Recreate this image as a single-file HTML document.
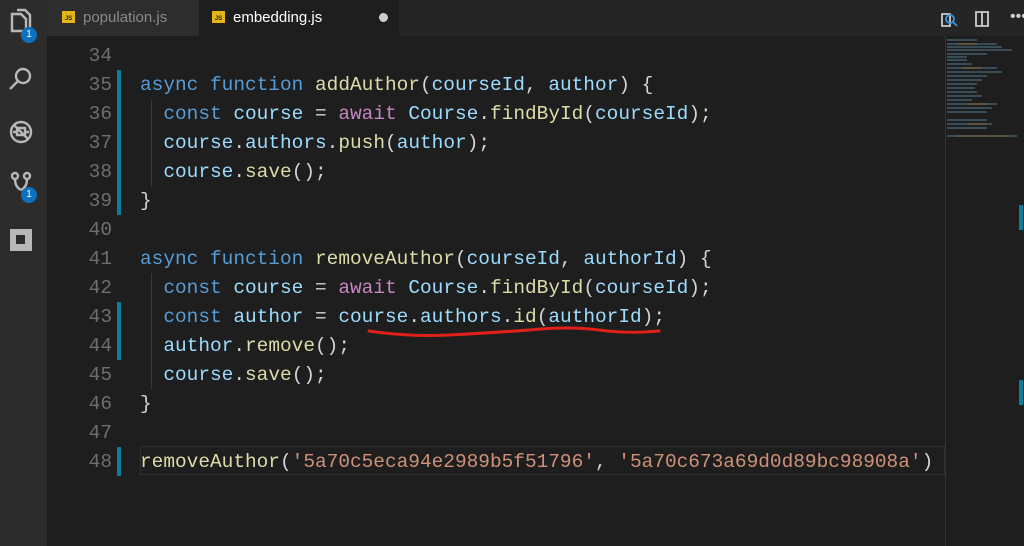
<!DOCTYPE html>
<html><head><style>
body{margin:0;width:1024px;height:546px;background:#1e1e1e;overflow:hidden;position:relative;font-family:"Liberation Sans",sans-serif}
#act{position:absolute;left:0;top:0;width:47px;height:546px;background:#2c2c2c}
#tabs{position:absolute;left:47px;top:0;width:977px;height:36px;background:#252526}
.tab{position:absolute;top:0;height:36px;font-size:15px;line-height:36px}
.js{position:absolute;top:11px;width:13px;height:12px;background:#e5b416;color:#222;font-size:6px;line-height:16px;text-align:center;font-weight:bold}
.ln{position:absolute;left:60px;width:52px;text-align:right;color:#6e6e6e}
.code{position:absolute;left:140px;white-space:pre;color:#d4d4d4}
.ln,.code{font-family:"Liberation Mono",monospace;font-size:19.45px;height:29px;line-height:29px}
.k{color:#569cd6}.f{color:#dcdcaa}.v{color:#9cdcfe}.a{color:#c586c0}.c{color:#4ec9b0}.s{color:#ce9178}
.bar{position:absolute;left:117px;width:4px;background:#0c7d9d}
.badge{position:absolute;width:16px;height:16px;border-radius:50%;background:#0e70c0;color:#fff;font-size:10px;line-height:16px;text-align:center}
</style></head><body>
<div id="act">
<svg width="47" height="260" style="position:absolute;left:0;top:0" fill="none" stroke="#b8b8b8" stroke-width="2.4">
<path d="M12 14h9l5 5v12h-14z"/><path d="M17 10h8l5 5v12"/>
<circle cx="23" cy="76" r="7"/><path d="M18 81l-8 8"/>
<circle cx="21" cy="132" r="10"/><path d="M14 125l14 14M17 128h8v7h-8zM13 132h4M25 132h4"/>
<circle cx="15" cy="176" r="3"/><circle cx="27" cy="176" r="3"/><path d="M15 179q0 8 6 11M27 179q0 8-6 11"/>
<rect x="10" y="229" width="22" height="22" fill="#b8b8b8" stroke="none"/><rect x="16" y="235" width="9" height="9" fill="#2c2c2c" stroke="none"/>
</svg>
<div class="badge" style="left:21px;top:27px">1</div>
<div class="badge" style="left:21px;top:187px">1</div>
</div>
<div id="tabs">
<div class="tab" style="left:0;width:152px;background:#2d2d2d;color:#8a8a8a"><div class="js" style="left:15px">JS</div><span style="position:absolute;left:36px">population.js</span></div>
<div class="tab" style="left:152px;width:200px;background:#1e1e1e;color:#fff"><div class="js" style="left:13px">JS</div><span style="position:absolute;left:34px">embedding.js</span><span style="position:absolute;left:180px;top:13px;width:9px;height:9px;border-radius:50%;background:#ccc"></span></div>
<svg style="position:absolute;left:890px;top:8px" width="80" height="22" fill="none" stroke-width="1.8">
<path d="M5 6h8v12H5z" stroke="#ccc"/><circle cx="13" cy="11" r="4" stroke="#3a96dd"/><path d="M16 14l4 4" stroke="#3a96dd"/>
<path d="M39 4h12v14H39zM45 4v14" stroke="#ccc"/>
</svg>
<div style="position:absolute;left:963px;top:8px;color:#ccc;font-size:16px">•••</div>
</div>
<div style="position:absolute;left:945px;top:36px;width:1px;height:510px;background:#333"></div>
<svg style="position:absolute;left:947px;top:38px" width="75" height="105">
<g stroke-width="1.2">
<path d="M0 2h30M0 6h50M0 9h55M0 12h65M0 16h40M0 19h20M0 22h20M0 26h25M0 30h50M0 34h55M0 38h40M0 42h35M0 46h30M0 50h28M0 54h30M0 58h35M0 62h25M0 66h50M0 70h45M0 74h40M0 82h40M0 86h45M0 90h40M0 98h70" stroke="#4a6a7a"/>
<path d="M10 6h20M15 30h20M20 66h20M20 86h20M10 98h50" stroke="#7a6a4a"/>
</g></svg>
<div style="position:absolute;left:1019px;top:205px;width:4px;height:25px;background:#0c7d9d"></div>
<div style="position:absolute;left:1019px;top:380px;width:4px;height:25px;background:#0c7d9d"></div>
<div class="bar" style="top:70px;height:145px"></div>
<div class="bar" style="top:302px;height:58px"></div>
<div class="bar" style="top:447px;height:29px"></div>
<div style="position:absolute;left:140px;top:446px;width:805px;height:29px;border:1px solid #2f2f2f;box-sizing:border-box"></div>
<div style="position:absolute;left:151px;top:100px;width:1px;height:87px;background:#3a3a3a"></div>
<div style="position:absolute;left:151px;top:273px;width:1px;height:116px;background:#3a3a3a"></div>

<div class="ln" style="top:42px">34</div>
<div class="ln" style="top:71px">35</div><div class="code" style="top:71px"><span class="k">async function</span> <span class="f">addAuthor</span>(<span class="v">courseId</span>, <span class="v">author</span>) {</div>
<div class="ln" style="top:100px">36</div><div class="code" style="top:100px">  <span class="k">const</span> <span class="v">course</span> = <span class="a">await</span> <span class="v">Course</span>.<span class="f">findById</span>(<span class="v">courseId</span>);</div>
<div class="ln" style="top:129px">37</div><div class="code" style="top:129px">  <span class="v">course</span>.<span class="v">authors</span>.<span class="f">push</span>(<span class="v">author</span>);</div>
<div class="ln" style="top:158px">38</div><div class="code" style="top:158px">  <span class="v">course</span>.<span class="f">save</span>();</div>
<div class="ln" style="top:187px">39</div><div class="code" style="top:187px">}</div>
<div class="ln" style="top:216px">40</div>
<div class="ln" style="top:245px">41</div><div class="code" style="top:245px"><span class="k">async function</span> <span class="f">removeAuthor</span>(<span class="v">courseId</span>, <span class="v">authorId</span>) {</div>
<div class="ln" style="top:274px">42</div><div class="code" style="top:274px">  <span class="k">const</span> <span class="v">course</span> = <span class="a">await</span> <span class="v">Course</span>.<span class="f">findById</span>(<span class="v">courseId</span>);</div>
<div class="ln" style="top:303px">43</div><div class="code" style="top:303px">  <span class="k">const</span> <span class="v">author</span> = <span class="v">course</span>.<span class="v">authors</span>.<span class="f">id</span>(<span class="v">authorId</span>);</div>
<div class="ln" style="top:332px">44</div><div class="code" style="top:332px">  <span class="v">author</span>.<span class="f">remove</span>();</div>
<div class="ln" style="top:361px">45</div><div class="code" style="top:361px">  <span class="v">course</span>.<span class="f">save</span>();</div>
<div class="ln" style="top:390px">46</div><div class="code" style="top:390px">}</div>
<div class="ln" style="top:419px">47</div>
<div class="ln" style="top:448px">48</div><div class="code" style="top:448px"><span class="f">removeAuthor</span>(<span class="s">'5a70c5eca94e2989b5f51796'</span>, <span class="s">'5a70c673a69d0d89bc98908a'</span>)</div>
<svg style="position:absolute;left:360px;top:318px" width="310" height="30"><path d="M9 13q40 6 80 4t80-5q40-4 70 0t60 1" fill="none" stroke="#e0201a" stroke-width="3" stroke-linecap="round"/></svg>
</body></html>
